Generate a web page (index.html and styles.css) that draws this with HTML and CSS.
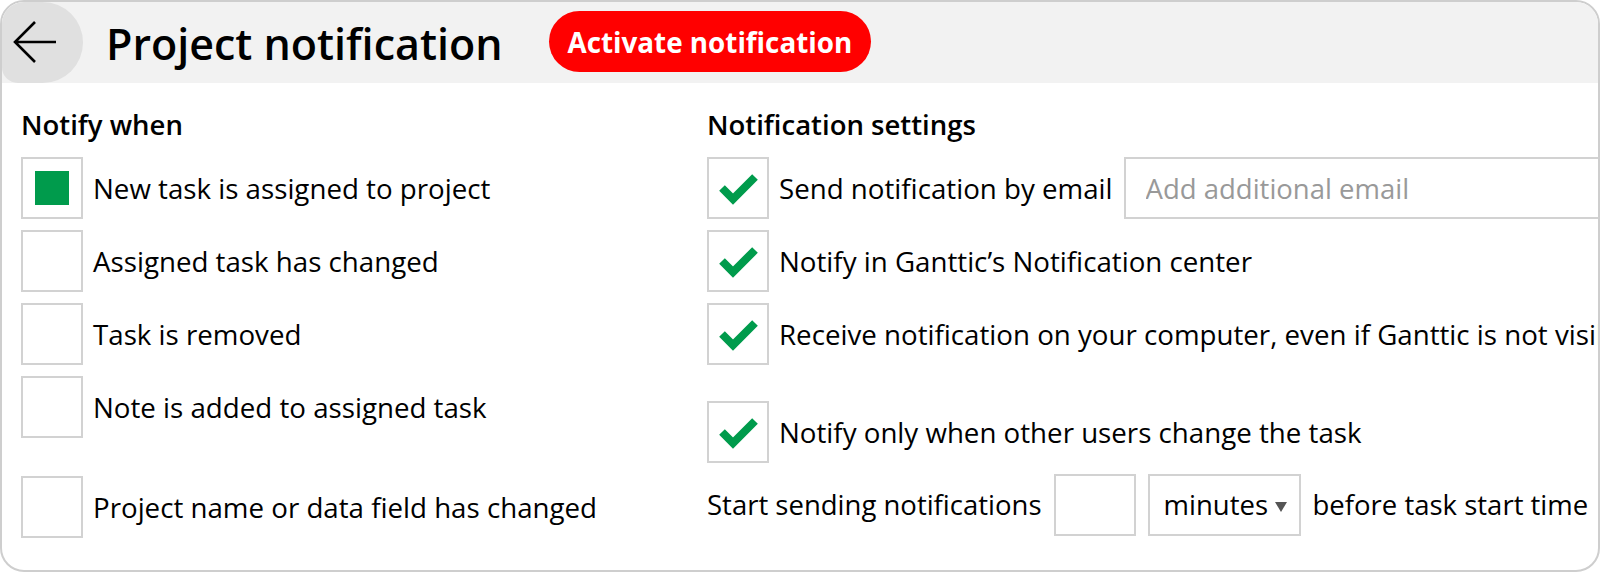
FILE: index.html
```html
<!DOCTYPE html>
<html>
<head>
  <meta charset="UTF-8">
  <title>Project notification</title>
  <link rel="stylesheet" href="styles.css">
</head>
<body>
  <div class="card">
    <!-- Top bar with back button, title and activate button -->
    <div class="top-bar">
      <div class="back-btn">
        <svg width="81" height="81" viewBox="0 0 81 81">
          <path d="M13 40 L54 40 M33 20 L13 40 L33 60" fill="none" stroke="#000" stroke-width="2.6"/>
        </svg>
      </div>
      <h1 class="title">Project notification</h1>
      <button class="activate-btn">Activate notification</button>
    </div>

    <div class="content">
      <!-- Left column: events -->
      <div class="col">
        <h2 class="col-title">Notify when</h2>
        <div class="option-list">
          <div class="option">
            <span class="box"><span class="box-fill"></span></span>
            <span>New task is assigned to project</span>
          </div>
          <div class="option">
            <span class="box"></span>
            <span>Assigned task has changed</span>
          </div>
          <div class="option">
            <span class="box"></span>
            <span>Task is removed</span>
          </div>
          <div class="option">
            <span class="box"></span>
            <span>Note is added to assigned task</span>
          </div>
          <div class="option option-left-gap">
            <span class="box"></span>
            <span>Project name or data field has changed</span>
          </div>
        </div>
      </div>

      <!-- Right column: settings -->
      <div class="col">
        <h2 class="col-title">Notification settings</h2>
        <div class="option-list">
          <div class="option">
            <span class="box">
              <svg class="check" viewBox="0 0 58 58"><polyline points="13,29 24,40 46,18" fill="none" stroke="#009b4c" stroke-width="8"/></svg>
            </span>
            <span>Send notification by email</span>
            <input class="email-input" type="text" placeholder="Add additional email">
          </div>
          <div class="option">
            <span class="box">
              <svg class="check" viewBox="0 0 58 58"><polyline points="13,29 24,40 46,18" fill="none" stroke="#009b4c" stroke-width="8"/></svg>
            </span>
            <span>Notify in Ganttic’s Notification center</span>
          </div>
          <div class="option">
            <span class="box">
              <svg class="check" viewBox="0 0 58 58"><polyline points="13,29 24,40 46,18" fill="none" stroke="#009b4c" stroke-width="8"/></svg>
            </span>
            <span>Receive notification on your computer, even if Ganttic is not visible</span>
          </div>
          <div class="option option-right-gap">
            <span class="box">
              <svg class="check" viewBox="0 0 58 58"><polyline points="13,29 24,40 46,18" fill="none" stroke="#009b4c" stroke-width="8"/></svg>
            </span>
            <span>Notify only when other users change the task</span>
          </div>
          <div class="option option-time">
            <span>Start sending notifications</span>
            <span class="num-box"></span>
            <div class="unit-select">
              <span>minutes</span>
              <svg width="12" height="10" viewBox="0 0 12 10"><path d="M0 0 L12 0 L6 10 Z" fill="#555"/></svg>
            </div>
            <span>before task start time</span>
          </div>
        </div>
      </div>
    </div>
  </div>
</body>
</html>
```

FILE: styles.css
```css
body {
  margin: 0;
  background: #fff;
  font-family: "Open Sans", "Noto Sans", sans-serif;
  color: #000;
}
.card {
  width: 1600px;
  height: 572px;
  box-sizing: border-box;
  border: 2px solid #cecece;
  border-radius: 24px;
  overflow: hidden;
  background: #fff;
}
/* Top bar */
.top-bar {
  display: flex;
  align-items: center;
  height: 81px;
  background: #f2f2f2;
}
.back-btn {
  width: 81px;
  height: 81px;
  background: #e0e0e0;
  border-radius: 0 41px 41px 16px;
  flex: none;
}
.back-btn svg { display: block; }
.title {
  margin: 2px 0 0 23px;
  font-size: 43px;
  font-weight: 600;
  line-height: 50px;
}
.activate-btn {
  margin: -2px 0 0 46px;
  height: 61px;
  padding: 0 19px;
  border: none;
  border-radius: 31px;
  background: #ff0000;
  color: #fff;
  font-family: inherit;
  font-size: 27.8px;
  font-weight: 700;
}
/* Content columns */
.content {
  display: grid;
  grid-template-columns: 686px minmax(0, 1fr);
  padding: 25px 0 0 19px;
}
.col-title {
  margin: 0 0 15px;
  font-size: 27.5px;
  font-weight: 600;
  line-height: 34px;
}
.option-list {
  display: flex;
  flex-direction: column;
  gap: 11px;
}
.option {
  display: flex;
  align-items: center;
  gap: 10px;
  height: 62px;
  font-size: 27.7px;
  line-height: 34px;
  white-space: nowrap;
}
.option-left-gap { margin-top: 27px; }
.option-right-gap { margin-top: 25px; }
.option-time { gap: 12px; font-size: 27.5px; }
.box {
  width: 62px;
  height: 62px;
  box-sizing: border-box;
  border: 2px solid #d2d2d2;
  background: #fff;
  display: flex;
  align-items: center;
  justify-content: center;
  flex: none;
}
.box-fill {
  width: 34px;
  height: 34px;
  background: #009b4c;
}
.check {
  width: 58px;
  height: 58px;
  display: block;
}
.email-input {
  flex: none;
  width: 560px;
  height: 62px;
  box-sizing: border-box;
  margin-left: 1px;
  padding: 0 20px;
  border: 2px solid #d2d2d2;
  font-family: inherit;
  font-size: 27.5px;
  color: #000;
  outline: none;
}
.email-input::placeholder { color: #999; }
.num-box {
  width: 82px;
  height: 62px;
  box-sizing: border-box;
  border: 2px solid #d2d2d2;
  flex: none;
}
.unit-select {
  width: 153px;
  height: 62px;
  box-sizing: border-box;
  border: 2px solid #d2d2d2;
  padding: 0 12px 0 14px;
  display: flex;
  align-items: center;
  justify-content: space-between;
  flex: none;
}
.unit-select svg { margin-top: 4px; }
```
